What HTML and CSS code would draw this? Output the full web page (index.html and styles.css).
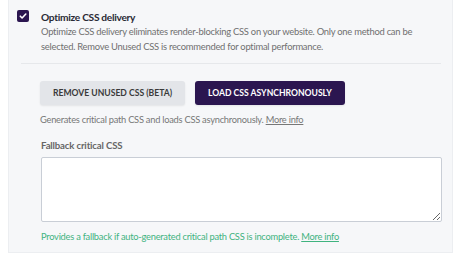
FILE: index.html
```html
<!DOCTYPE html>
<html>
<head>
<meta charset="utf-8">
<link rel="stylesheet" href="styles.css">
</head>
<body>
<div class="panel">
  <div class="head">
    <span class="check">
      <svg viewBox="0 0 12 12" width="12" height="12"><path d="M3.3 6.2 L5.1 8 L8.8 4" fill="none" stroke="#fff" stroke-width="1.6" stroke-linecap="round" stroke-linejoin="round"/></svg>
    </span>
    <span class="title">Optimize CSS delivery</span>
  </div>
  <p class="desc">Optimize CSS delivery eliminates render-blocking CSS on your website. Only one method can be selected. Remove Unused CSS is recommended for optimal performance.</p>
  <hr class="sep">
  <div class="body">
    <div class="tabs">
      <button class="tab">REMOVE UNUSED CSS (BETA)</button>
      <button class="tab active">LOAD CSS ASYNCHRONOUSLY</button>
    </div>
    <p class="help">Generates critical path CSS and loads CSS asynchronously. <a href="#">More info</a></p>
    <label class="label">Fallback critical CSS</label>
    <textarea class="area"></textarea>
    <p class="note">Provides a fallback if auto-generated critical path CSS is incomplete. <a href="#">More info</a></p>
  </div>
</div>
</body>
</html>
```
FILE: styles.css
```css
html, body { margin: 0; padding: 0; background: #fff; }
body { font-family: Lato, "Open Sans", sans-serif; }
.panel {
  margin-left: 8px;
  width: 443px;
  height: 252px;
  background: #f6f7f9;
  border: 1px solid #eceef1;
  border-top: none;
  box-sizing: content-box;
}
.head {
  display: flex;
  align-items: center;
  padding: 10px 0 0 8px;
  height: 12px;
}
.check {
  width: 12px; height: 12px;
  background: #2b1650;
  border-radius: 2px;
  display: flex;
}
.title {
  margin-left: 12px;
  margin-top: 2px;
  font-size: 10.2px;
  letter-spacing: -0.3px;
  font-weight: 700;
  color: #2a2a35;
}
.desc {
  margin: 2px 12px 0 32px;
  font-size: 9.4px;
  letter-spacing: -0.25px;
  line-height: 15px;
  color: #707070;
}
.sep {
  border: none;
  border-top: 1px solid #e6e8eb;
  margin: 9px 11px 0 12px;
}
.body { padding-left: 31px; padding-right: 10px; }
.tabs { display: flex; gap: 10px; margin-top: 17px; }
.tab {
  height: 24px;
  border: none;
  border-radius: 3px;
  font-family: Lato, sans-serif;
  font-weight: 700;
  font-size: 8.6px;
  background: #e3e5e9;
  color: #3a3a3a;
  padding: 0 13px;
  box-shadow: 0 1px 2px rgba(0,0,0,0.08);
}
.tab.active { background: #2b1650; color: #fff; }
.help {
  margin: 9px 0 0 0;
  font-size: 9.3px;
  letter-spacing: -0.25px;
  line-height: 12px;
  color: #777;
}
.help a { color: #777; }
.label {
  display: block;
  margin-top: 14px;
  margin-left: 1px;
  font-size: 9.6px;
  letter-spacing: -0.15px;
  font-weight: 700;
  color: #666;
  line-height: 12px;
}
.area {
  display: block;
  margin-top: 5px;
  margin-left: 1px;
  width: 401px;
  height: 65px;
  box-sizing: border-box;
  border: 1px solid #c9ced6;
  border-radius: 2px;
  background: #fff;
}
.note {
  margin: 9px 0 0 1px;
  font-size: 9.3px;
  letter-spacing: -0.25px;
  line-height: 12px;
  color: #3fb37f;
}
.note a { color: #3fb37f; }
```
